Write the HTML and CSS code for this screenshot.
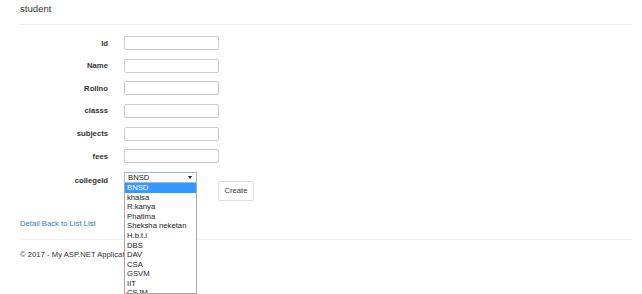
FILE: index.html
```html
<!DOCTYPE html>
<html lang="en">
<head>
    <meta charset="UTF-8">
    <meta name="viewport" content="width=device-width, initial-scale=1.0">
    <title>Create - My ASP.NET Application</title>
    <link rel="stylesheet" href="styles.css">
</head>
<body>
<div class="container">
    <h4>student</h4>
    <hr class="top-rule">

    <form class="form-horizontal">
        <div class="form-group">
            <label class="control-label" for="id">Id</label>
            <input class="form-control" type="text" id="id">
        </div>
        <div class="form-group">
            <label class="control-label" for="name">Name</label>
            <input class="form-control" type="text" id="name">
        </div>
        <div class="form-group">
            <label class="control-label" for="rollno">Rollno</label>
            <input class="form-control" type="text" id="rollno">
        </div>
        <div class="form-group">
            <label class="control-label" for="classs">classs</label>
            <input class="form-control" type="text" id="classs">
        </div>
        <div class="form-group">
            <label class="control-label" for="subjects">subjects</label>
            <input class="form-control" type="text" id="subjects">
        </div>
        <div class="form-group">
            <label class="control-label" for="fees">fees</label>
            <input class="form-control" type="text" id="fees">
        </div>
        <div class="form-group select-row">
            <label class="control-label">collegeId</label>
            <div class="select-wrap">
                <div class="select-box">
                    <span>BNSD</span>
                    <svg class="arrow" width="4" height="3" viewBox="0 0 4 3"><polygon points="0,0 4,0 2,3" fill="#222"/></svg>
                </div>
                <ul class="dropdown">
                    <li class="selected">BNSD</li>
                    <li>khalsa</li>
                    <li>R.kanya</li>
                    <li>Phatima</li>
                    <li>Sheksha neketan</li>
                    <li>H.b.t.i</li>
                    <li>DBS</li>
                    <li>DAV</li>
                    <li>CSA</li>
                    <li>GSVM</li>
                    <li>IIT</li>
                    <li>CSJM</li>
                </ul>
            </div>
            <button type="button" class="btn">Create</button>
        </div>
    </form>

    <div class="back-link">
        <a href="#">Detail Back to List List</a>
    </div>

    <hr class="footer-rule">
    <footer>
        <p>&copy; 2017 - My ASP.NET Application</p>
    </footer>
</div>
</body>
</html>
```

FILE: styles.css
```css
html {
    height: 100%;
}
body {
    font-family: "Liberation Sans", Arial, sans-serif;
    font-size: 7.7px;
    line-height: 11px;
    color: #333;
    margin: 0;
    padding: 0;
    height: 100%;
    overflow: hidden;
    background-color: #fff;
}
.container {
    padding: 0 10px 0 20px;
}
h4 {
    font-size: 9.6px;
    font-weight: normal;
    line-height: 12px;
    margin: 3px 0 0;
}
hr {
    border: 0;
    border-top: 1px solid #eee;
    margin: 0;
}
.top-rule {
    margin-top: 9px;
}
.form-horizontal {
    margin-top: 11px;
    display: flex;
    flex-direction: column;
    gap: 8.67px;
}
.form-group {
    display: flex;
    align-items: center;
    height: 14px;
}
.control-label {
    width: 88px;
    text-align: right;
    font-weight: bold;
    margin-right: 16px;
}
.form-control {
    box-sizing: border-box;
    width: 95px;
    height: 14px;
    border: 1px solid #ccc;
    border-radius: 2px;
    padding: 0 3px;
    font: inherit;
    margin: 0;
}
.select-row {
    align-items: flex-start;
    height: 29px;
}
.select-row .control-label {
    line-height: 11px;
    margin-top: 3px;
}
.select-wrap {
    position: relative;
    width: 73px;
}
.select-box {
    box-sizing: border-box;
    height: 11px;
    border: 1px solid #a7b6cf;
    display: flex;
    align-items: center;
    justify-content: space-between;
    padding: 0 4px 0 3px;
    line-height: 9px;
    color: #222;
}
.arrow {
    display: block;
}
.dropdown {
    position: absolute;
    top: 11px;
    left: 0;
    box-sizing: border-box;
    width: 73px;
    height: 111px;
    margin: 0;
    padding: 0;
    list-style: none;
    background: #fff;
    border: 1px solid #a9a9a9;
    border-top: 0;
    overflow: hidden;
    z-index: 2;
}
.dropdown li {
    line-height: 9.6px;
    padding-left: 2px;
    color: #222;
    white-space: nowrap;
}
.dropdown li.selected {
    background-color: #3399ff;
    color: #fff;
}
.btn {
    box-sizing: border-box;
    margin: 9px 0 0 21px;
    width: 36px;
    height: 20px;
    padding: 0;
    background: #fff;
    border: 1px solid #ddd;
    border-radius: 2px;
    font: inherit;
    color: #333;
}
.back-link {
    margin-top: 17px;
}
.back-link a {
    color: #337ab7;
    text-decoration: none;
}
.footer-rule {
    margin-top: 10px;
}
footer p {
    margin: 9px 0 0;
}
```
